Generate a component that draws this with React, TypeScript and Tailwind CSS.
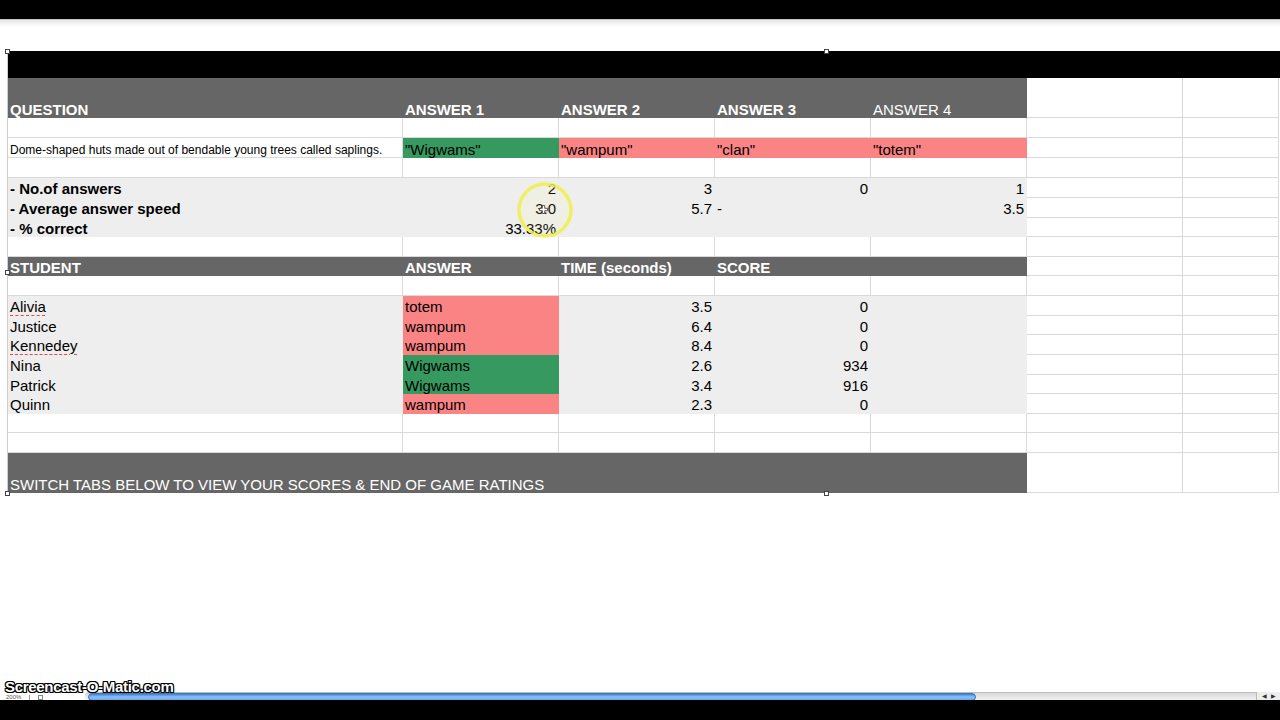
import type { ReactNode } from "react";

type Fill = "white" | "gray" | "dark" | "green" | "red";

const fillClass: Record<Fill, string> = {
  white: "bg-white border-[#d9d9d9]",
  gray: "bg-[#eeeeee] border-[#eeeeee]",
  dark: "bg-[#666666] border-[#666666] text-white",
  green: "bg-[#36995f] border-[#36995f]",
  red: "bg-[#fa8383] border-[#fa8383]",
};

const colW = ["w-[395px]", "w-[156px]", "w-[156px]", "w-[156px]", "w-[156px]", "w-[156px]", "w-[96px]"];

type CellDef = { t?: ReactNode; f?: Fill; r?: boolean; b?: boolean; w?: string; cls?: string };

function Row({ h, cells, tall, pad = "pt-[3px]" }: { h: string; cells: CellDef[]; tall?: boolean; pad?: string }) {
  const filled: CellDef[] = [...cells];
  let used = cells.reduce((n, c) => n + (c.w ? 5 : 1), 0);
  while (used < 7) {
    filled.push({});
    used++;
  }
  let col = 0;
  return (
    <div className={`flex ${h}`}>
      {filled.map((c, i) => {
        const w = c.w ?? colW[col];
        col += c.w ? 5 : 1;
        return (
          <div
            key={i}
            className={`${w} shrink-0 border-r border-b flex pl-[2px] pr-[2px] whitespace-nowrap ${fillClass[c.f ?? "white"]} ${c.r ? "justify-end" : ""} ${tall ? "items-end leading-[14px]" : `items-center ${pad} leading-[16px]`} ${c.b ? "font-bold" : ""} ${c.cls ?? ""}`}
          >
            {c.t}
          </div>
        );
      })}
    </div>
  );
}

const students = [
  { name: "Alivia", ans: "totem", ok: false, time: "3.5", score: "0", typo: true, h: "h-[20px]" },
  { name: "Justice", ans: "wampum", ok: false, time: "6.4", score: "0", typo: false, h: "h-[19px]" },
  { name: "Kennedey", ans: "wampum", ok: false, time: "8.4", score: "0", typo: true, h: "h-[20px]" },
  { name: "Nina", ans: "Wigwams", ok: true, time: "2.6", score: "934", typo: false, h: "h-[20px]" },
  { name: "Patrick", ans: "Wigwams", ok: true, time: "3.4", score: "916", typo: false, h: "h-[19px]" },
  { name: "Quinn", ans: "wampum", ok: false, time: "2.3", score: "0", typo: false, h: "h-[20px]" },
];

function Handle({ cls }: { cls: string }) {
  return <div className={`absolute w-[5px] h-[5px] bg-white border border-[#444] ${cls}`} />;
}

export default function App() {
  return (
    <div className="relative h-screen w-full overflow-hidden bg-white flex flex-col font-['Liberation_Sans',Arial,sans-serif] text-[15px] text-black">
      {/* window chrome */}
      <div className="h-[19px] bg-black shrink-0" />
      <div className="h-[32px] shrink-0 border-t border-[#c4c4c4] bg-white">
        <div className="h-[7px] bg-linear-to-b from-[#e6e6e6] to-white" />
      </div>

      {/* sheet */}
      <div className="ml-[7px] border-l border-[#cdcdcd] shrink-0">
        <div className="h-[27px] bg-black" />
        <Row
          h="h-[40px]"
          tall
          cells={[
            { t: "QUESTION", f: "dark", b: true },
            { t: "ANSWER 1", f: "dark", b: true },
            { t: "ANSWER 2", f: "dark", b: true },
            { t: "ANSWER 3", f: "dark", b: true },
            { t: "ANSWER 4", f: "dark" },
          ]}
        />
        <Row h="h-[20px]" cells={[]} />
        <Row
          h="h-[20px]"
          pad="pt-[4px]"
          cells={[
            { t: "Dome-shaped huts made out of bendable young trees called saplings.", cls: "text-[12px]" },
            { t: '"Wigwams"', f: "green" },
            { t: '"wampum"', f: "red" },
            { t: '"clan"', f: "red" },
            { t: '"totem"', f: "red" },
          ]}
        />
        <Row h="h-[20px]" cells={[]} />
        <Row
          h="h-[20px]"
          cells={[
            { t: "- No.of answers", f: "gray", b: true },
            { t: "2", f: "gray", r: true },
            { t: "3", f: "gray", r: true },
            { t: "0", f: "gray", r: true },
            { t: "1", f: "gray", r: true },
          ]}
        />
        <Row
          h="h-[20px]"
          cells={[
            { t: "- Average answer speed", f: "gray", b: true },
            { t: "3.0", f: "gray", r: true },
            { t: "5.7", f: "gray", r: true },
            { t: "-", f: "gray" },
            { t: "3.5", f: "gray", r: true },
          ]}
        />
        <Row
          h="h-[19px]"
          cells={[
            { t: "- % correct", f: "gray", b: true },
            { t: "33.33%", f: "gray", r: true },
            { f: "gray" },
            { f: "gray" },
            { f: "gray" },
          ]}
        />
        <Row h="h-[20px]" cells={[]} />
        <Row
          h="h-[19px]"
          cells={[
            { t: "STUDENT", f: "dark", b: true },
            { t: "ANSWER", f: "dark", b: true },
            { t: "TIME (seconds)", f: "dark", b: true },
            { t: "SCORE", f: "dark", b: true },
            { f: "dark" },
          ]}
        />
        <Row h="h-[20px]" cells={[]} />
        {students.map((s) => (
          <Row
            key={s.name}
            h={s.h}
            cells={[
              {
                t: s.typo ? (
                  <span className="underline decoration-dashed decoration-[#e04a4a] decoration-1 underline-offset-[3px]">{s.name}</span>
                ) : (
                  s.name
                ),
                f: "gray",
              },
              { t: s.ans, f: s.ok ? "green" : "red" },
              { t: s.time, f: "gray", r: true },
              { t: s.score, f: "gray", r: true },
              { f: "gray" },
            ]}
          />
        ))}
        <Row h="h-[19px]" cells={[]} />
        <Row h="h-[20px]" cells={[]} />
        <Row
          h="h-[40px]"
          tall
          cells={[{ t: "SWITCH TABS BELOW TO VIEW YOUR SCORES & END OF GAME RATINGS", f: "dark", w: "w-[1019px]" }]}
        />
      </div>

      <div className="flex-1" />

      {/* bottom scroll bar */}
      <div className="h-[8px] shrink-0 flex items-start">
        <div className="w-[85px] h-full flex items-end gap-2 pl-[6px] text-[6px] leading-[6px] text-[#555]">
          <span>200%</span>
          <span className="w-[1px] h-[5px] bg-[#999]" />
          <span className="w-[5px] h-[5px] border border-[#888]" />
        </div>
        <div className="flex-1 h-[9px] rounded-l-full bg-linear-to-b from-[#d8d8d8] to-[#f4f4f4] border-t border-[#bdbdbd] flex">
          <div className="w-[888px] h-full ml-[3px] rounded-full bg-linear-to-b from-[#3c7fd6] via-[#8ec0f4] to-[#6aa8ee] border border-[#3a74c4]" />
        </div>
        <div className="w-[24px] h-[9px] flex items-center justify-center gap-[4px] text-[6px] text-[#333] bg-[#eee] border-l border-[#bbb]">
          <span>◀</span>
          <span>▶</span>
        </div>
      </div>
      <div className="h-[20px] bg-black shrink-0" />

      {/* selection handles */}
      <Handle cls="left-[5px] top-[49px]" />
      <Handle cls="left-[824px] top-[49px]" />
      <Handle cls="left-[5px] top-[270px]" />
      <Handle cls="left-[5px] top-[491px]" />
      <Handle cls="left-[824px] top-[491px]" />

      {/* cursor highlight */}
      <svg className="absolute left-[516px] top-[181px]" width="58" height="58" viewBox="0 0 58 58">
        <circle cx="29" cy="29" r="26" fill="rgba(250,250,120,0.08)" stroke="#eeee4a" strokeOpacity="0.85" strokeWidth="3.5" />
      </svg>
      <svg className="absolute left-[539px] top-[205px]" width="9" height="9" viewBox="0 0 9 9">
        <path d="M3.3 0.5h2.4v2.8h2.8v2.4H5.7v2.8H3.3V5.7H0.5V3.3h2.8z" fill="#fff" stroke="#333" strokeWidth="0.8" />
      </svg>

      {/* watermark */}
      <div className="absolute left-[5px] top-[680px] text-[15px] font-bold leading-[13px] tracking-[-0.3px] text-white [text-shadow:-1px_-1px_0_#000,1px_-1px_0_#000,-1px_1px_0_#000,1px_1px_0_#000,0_1px_0_#000,0_-1px_0_#000,1px_0_0_#000,-1px_0_0_#000]">
        Screencast-O-Matic.com
      </div>
    </div>
  );
}
